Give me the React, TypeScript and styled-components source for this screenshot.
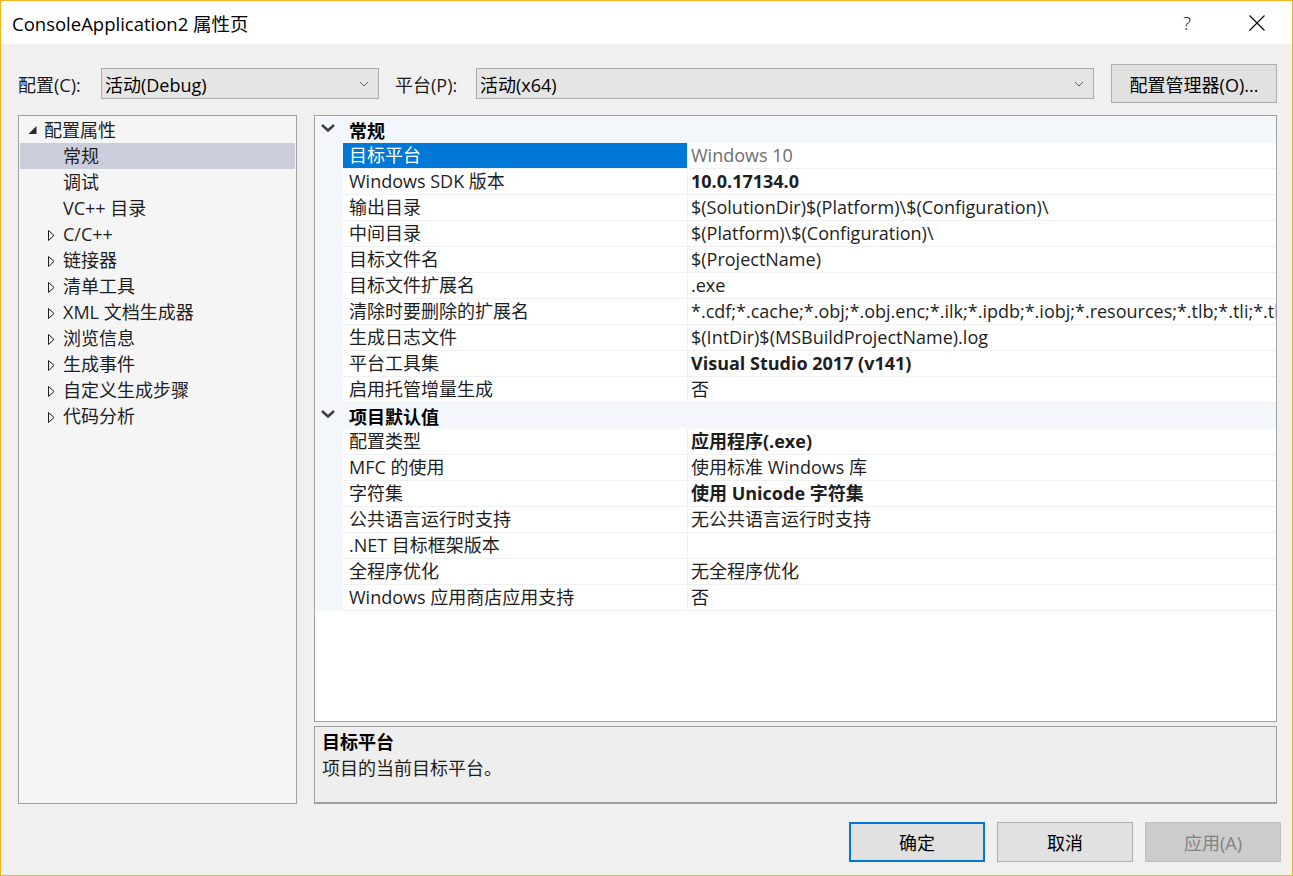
import React from 'react'
import styled, { createGlobalStyle } from 'styled-components'

const GlobalStyle = createGlobalStyle`
  html, body { margin: 0; padding: 0; background: #f0f0f0; }
  body {
    font-family: 'Open Sans', 'Noto Sans CJK SC', sans-serif;
    font-size: 18px;
    color: #000;
  }
  * { box-sizing: border-box; }
`

type TreeItem = { label: string; level: number; arrow?: 'open' | 'closed'; selected?: boolean }

const treeItems: TreeItem[] = [
  { label: '配置属性', level: 0, arrow: 'open' },
  { label: '常规', level: 1, selected: true },
  { label: '调试', level: 1 },
  { label: 'VC++ 目录', level: 1 },
  { label: 'C/C++', level: 1, arrow: 'closed' },
  { label: '链接器', level: 1, arrow: 'closed' },
  { label: '清单工具', level: 1, arrow: 'closed' },
  { label: 'XML 文档生成器', level: 1, arrow: 'closed' },
  { label: '浏览信息', level: 1, arrow: 'closed' },
  { label: '生成事件', level: 1, arrow: 'closed' },
  { label: '自定义生成步骤', level: 1, arrow: 'closed' },
  { label: '代码分析', level: 1, arrow: 'closed' },
]

type Prop = { name: string; value: string; bold?: boolean; muted?: boolean; selected?: boolean }
type Category = { title: string; props: Prop[] }

const categories: Category[] = [
  {
    title: '常规',
    props: [
      { name: '目标平台', value: 'Windows 10', muted: true, selected: true },
      { name: 'Windows SDK 版本', value: '10.0.17134.0', bold: true },
      { name: '输出目录', value: '$(SolutionDir)$(Platform)\\$(Configuration)\\' },
      { name: '中间目录', value: '$(Platform)\\$(Configuration)\\' },
      { name: '目标文件名', value: '$(ProjectName)' },
      { name: '目标文件扩展名', value: '.exe' },
      {
        name: '清除时要删除的扩展名',
        value: '*.cdf;*.cache;*.obj;*.obj.enc;*.ilk;*.ipdb;*.iobj;*.resources;*.tlb;*.tli;*.tlh;*',
      },
      { name: '生成日志文件', value: '$(IntDir)$(MSBuildProjectName).log' },
      { name: '平台工具集', value: 'Visual Studio 2017 (v141)', bold: true },
      { name: '启用托管增量生成', value: '否' },
    ],
  },
  {
    title: '项目默认值',
    props: [
      { name: '配置类型', value: '应用程序(.exe)', bold: true },
      { name: 'MFC 的使用', value: '使用标准 Windows 库' },
      { name: '字符集', value: '使用 Unicode 字符集', bold: true },
      { name: '公共语言运行时支持', value: '无公共语言运行时支持' },
      { name: '.NET 目标框架版本', value: '' },
      { name: '全程序优化', value: '无全程序优化' },
      { name: 'Windows 应用商店应用支持', value: '否' },
    ],
  },
]

const App: React.FC = () => {
  return (
    <Window>
      <GlobalStyle />
      <TitleBar>
        <Title>ConsoleApplication2 属性页</Title>
        <CaptionButton>?</CaptionButton>
        <CaptionButton>
          <svg width='16' height='16' viewBox='0 0 16 16'>
            <path d='M0.5 0.5 L15.5 15.5 M15.5 0.5 L0.5 15.5' stroke='#000' strokeWidth='1.1' />
          </svg>
        </CaptionButton>
      </TitleBar>

      <Toolbar>
        <FieldLabel width={83}>配置(C):</FieldLabel>
        <Select width={278}>
          <span>活动(Debug)</span>
          <Chevron />
        </Select>
        <FieldLabel width={81} className='gap'>
          平台(P):
        </FieldLabel>
        <Select width={618}>
          <span>活动(x64)</span>
          <Chevron />
        </Select>
        <ManagerButton>配置管理器(O)...</ManagerButton>
      </Toolbar>

      <Main>
        <Tree>
          {treeItems.map((item) => (
            <TreeRow key={item.label} level={item.level} selected={item.selected}>
              <ArrowSlot>
                {item.arrow === 'open' && (
                  <svg width='18' height='26' viewBox='0 0 18 26'>
                    <polygon points='10.5,9 10.5,17 2.5,17' fill='#262626' />
                  </svg>
                )}
                {item.arrow === 'closed' && (
                  <svg width='18' height='26' viewBox='0 0 18 26'>
                    <polygon points='3.5,9.5 9,14.5 3.5,19.5' fill='none' stroke='#1e1e1e' strokeWidth='1' />
                  </svg>
                )}
              </ArrowSlot>
              <span>{item.label}</span>
            </TreeRow>
          ))}
        </Tree>

        <RightColumn>
          <Grid>
            {categories.map((cat) => (
              <React.Fragment key={cat.title}>
                <CategoryRow>
                  <Gutter>
                    <svg width='16' height='10' viewBox='0 0 16 10'>
                      <polyline points='2,2 8,7.5 14,2' fill='none' stroke='#3c3c3c' strokeWidth='2.4' />
                    </svg>
                  </Gutter>
                  <CategoryTitle>{cat.title}</CategoryTitle>
                </CategoryRow>
                {cat.props.map((p) => (
                  <PropRow key={p.name}>
                    <Gutter />
                    <NameCell selected={p.selected}>{p.name}</NameCell>
                    <ValueCell bold={p.bold} muted={p.muted}>
                      {p.value}
                    </ValueCell>
                  </PropRow>
                ))}
              </React.Fragment>
            ))}
          </Grid>
          <Description>
            <DescTitle>目标平台</DescTitle>
            <div>项目的当前目标平台。</div>
          </Description>
        </RightColumn>
      </Main>

      <Footer>
        <DialogButton variant='default'>确定</DialogButton>
        <DialogButton>取消</DialogButton>
        <DialogButton variant='disabled'>应用(A)</DialogButton>
      </Footer>
    </Window>
  )
}

const Chevron: React.FC = () => (
  <svg width='10' height='6' viewBox='0 0 10 6'>
    <polyline points='1,1 5,5 9,1' fill='none' stroke='#606060' strokeWidth='1' />
  </svg>
)

const Window = styled.div`
  width: 1293px;
  height: 876px;
  border: 1px solid #f1b51f;
  background: #f0f0f0;
  display: flex;
  flex-direction: column;
  overflow: hidden;
`

const TitleBar = styled.div`
  height: 43px;
  background: #fff;
  display: flex;
  align-items: center;
  padding-left: 11px;
  flex-shrink: 0;
`

const Title = styled.div`
  flex: 1;
  font-size: 18.5px;
  color: #000;
`

const CaptionButton = styled.div`
  width: 70px;
  height: 43px;
  display: flex;
  align-items: center;
  justify-content: center;
  font-size: 19px;
  font-weight: 300;
  color: #111;
`

const Toolbar = styled.div`
  margin-top: 20px;
  height: 39px;
  display: flex;
  align-items: center;
  padding-left: 17px;
  flex-shrink: 0;
`

const FieldLabel = styled.div<{ width: number }>`
  width: ${(p) => p.width}px;
  flex-shrink: 0;
  color: #1a1a1a;
  &.gap {
    margin-left: 16px;
  }
`

const Select = styled.div<{ width: number }>`
  width: ${(p) => p.width}px;
  flex-shrink: 0;
  height: 31px;
  background: #e5e5e5;
  border: 1px solid #acacac;
  display: flex;
  align-items: center;
  justify-content: space-between;
  padding: 0 9px 0 3px;
  color: #000;
`

const ManagerButton = styled.div`
  margin-left: 17px;
  width: 166px;
  flex-shrink: 0;
  height: 39px;
  background: #e1e1e1;
  border: 1px solid #adadad;
  display: flex;
  align-items: center;
  justify-content: center;
  color: #000;
`

const Main = styled.div`
  margin-top: 12px;
  height: 689px;
  display: flex;
  gap: 17px;
  padding: 0 15px 0 17px;
  flex-shrink: 0;
`

const Tree = styled.div`
  width: 279px;
  flex-shrink: 0;
  border: 1px solid #a0a0a0;
  background: #f5f5f5;
  padding: 1px;
`

const TreeRow = styled.div<{ level: number; selected?: boolean }>`
  height: 26px;
  line-height: 26px;
  display: flex;
  align-items: center;
  padding-left: ${(p) => 6 + p.level * 19}px;
  background: ${(p) => (p.selected ? '#cccedb' : 'transparent')};
  color: #1e1e1e;
  white-space: nowrap;
`

const ArrowSlot = styled.span`
  width: 18px;
  height: 26px;
  flex-shrink: 0;
  display: block;
  svg {
    display: block;
  }
`

const RightColumn = styled.div`
  flex: 1;
  min-width: 0;
  display: flex;
  flex-direction: column;
  gap: 4px;
`

const Grid = styled.div`
  height: 607px;
  border: 1px solid #a0a0a0;
  background: #fff;
  padding-top: 1px;
  overflow: hidden;
`

const CategoryRow = styled.div`
  height: 26px;
  display: flex;
  align-items: center;
  background: #f3f6fb;
`

const Gutter = styled.div`
  width: 28px;
  height: 100%;
  flex-shrink: 0;
  display: flex;
  align-items: center;
  justify-content: center;
  padding-right: 2px;
  padding-bottom: 5px;
  background: #f3f6fb;
`

const CategoryTitle = styled.div`
  padding-left: 6px;
  font-weight: 700;
  color: #000;
`

const PropRow = styled.div`
  height: 26px;
  display: flex;
  align-items: stretch;
`

const NameCell = styled.div<{ selected?: boolean }>`
  width: 345px;
  flex-shrink: 0;
  padding-left: 6px;
  line-height: 25px;
  border-bottom: 1px solid #f0f0f0;
  border-right: 1px solid #f0f0f0;
  background: ${(p) => (p.selected ? '#0078d7' : '#fff')};
  color: ${(p) => (p.selected ? '#fff' : '#1e1e1e')};
  white-space: nowrap;
`

const ValueCell = styled.div<{ bold?: boolean; muted?: boolean }>`
  flex: 1;
  min-width: 0;
  padding-left: 3px;
  line-height: 25px;
  border-bottom: 1px solid #f0f0f0;
  font-weight: ${(p) => (p.bold ? 700 : 400)};
  color: ${(p) => (p.muted ? '#6d6d6d' : '#1e1e1e')};
  white-space: nowrap;
  overflow: hidden;
`

const Description = styled.div`
  height: 78px;
  border: 1px solid #a0a0a0;
  border-bottom-width: 2px;
  background: #eeeeee;
  padding: 2px 7px 0;
  line-height: 26px;
  color: #1e1e1e;
`

const DescTitle = styled.div`
  font-weight: 700;
  color: #000;
`

const Footer = styled.div`
  margin-top: 18px;
  display: flex;
  justify-content: flex-end;
  gap: 12px;
  padding-right: 11px;
`

const DialogButton = styled.div<{ variant?: 'default' | 'disabled' }>`
  width: 136px;
  height: 40px;
  display: flex;
  align-items: center;
  justify-content: center;
  background: ${(p) => (p.variant === 'disabled' ? '#cccccc' : '#e1e1e1')};
  border: ${(p) =>
    p.variant === 'default' ? '2px solid #0078d7' : p.variant === 'disabled' ? '1px solid #bfbfbf' : '1px solid #adadad'};
  color: ${(p) => (p.variant === 'disabled' ? '#838383' : '#000')};
`

export default App
